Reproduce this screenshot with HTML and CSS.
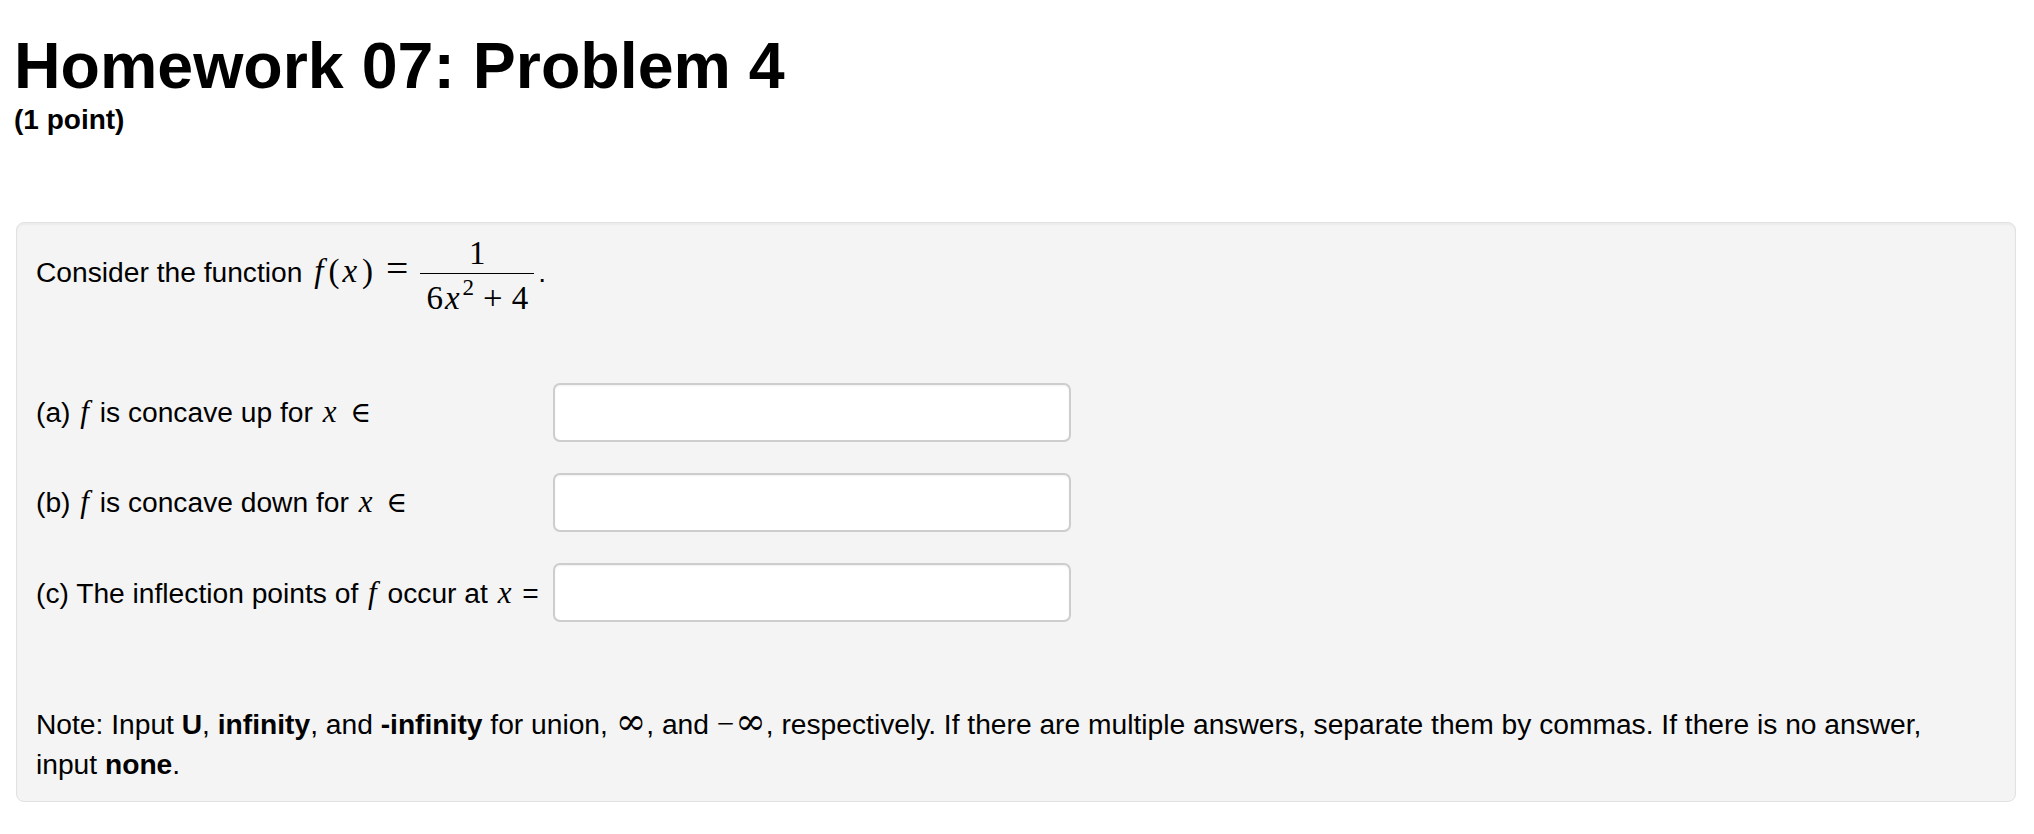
FILE: index.html
```html
<!DOCTYPE html>
<html lang="en">
<head>
<meta charset="utf-8">
<title>Homework 07: Problem 4</title>
<link rel="stylesheet" href="styles.css">
</head>
<body>
<header class="problem-header">
  <h1 class="title">Homework 07: Problem 4</h1>
  <div class="points">(1 point)</div>
</header>
<section class="problem">
  <p class="intro">Consider the function <span class="math"><i class="mi f-lead">f</i><span class="paren">(</span><i class="mi x-in">x</i><span class="paren">)</span><span class="rel">=</span><span class="frac"><span class="num">1</span><span class="den"><span class="d6">6</span><i class="mi x-den">x</i><sup class="sup">2</sup><span class="bin">+</span>4</span></span></span><span class="punct">.</span></p>
  <div class="answers">
    <label class="row-label" for="ans-a">(a) <i class="mi lf">f</i> is concave up for <i class="mi lx">x</i> <span class="elem">∈</span></label>
    <input class="answer" id="ans-a" type="text">
    <label class="row-label" for="ans-b">(b) <i class="mi lf">f</i> is concave down for <i class="mi lx">x</i> <span class="elem">∈</span></label>
    <input class="answer" id="ans-b" type="text">
    <label class="row-label" for="ans-c">(c) The inflection points of <i class="mi lf">f</i> occur at <i class="mi lx">x</i> =</label>
    <input class="answer" id="ans-c" type="text">
  </div>
  <p class="note">Note: Input <b>U</b>, <b>infinity</b>, and <b>-infinity</b> for union, <span class="inf">∞</span>, and <span class="minus">−</span><span class="inf">∞</span>, respectively. If there are multiple answers, separate them by commas. If there is no answer, input <b>none</b>.</p>
</section>
</body>
</html>
```
FILE: styles.css
```css
* {
  box-sizing: border-box;
}

body {
  margin: 0;
  padding: 0 18px 0 16px;
  background: #ffffff;
  color: #000000;
  font-family: "Liberation Sans", Arial, Helvetica, sans-serif;
}

.title {
  margin: 34px 0 0 -2px;
  font-size: 64.5px;
  line-height: 64px;
  font-weight: 700;
}

.points {
  margin: 6px 0 0 -2px;
  font-size: 28px;
  line-height: 32px;
  font-weight: 700;
}

.problem {
  margin-top: 86px;
  padding: 14px 19px 17px;
  background: #f4f4f4;
  border: 1px solid #e1e1e1;
  border-radius: 8px;
  box-shadow: inset 0 2px 2px rgba(0, 0, 0, 0.04);
  font-size: 28.2px;
  line-height: 40px;
}

.intro {
  margin: 0;
  line-height: 38px;
}

/* ---------- math ---------- */

.math {
  font-family: "Liberation Serif", "DejaVu Serif", serif;
  font-size: 33px;
}

.mi {
  font-family: "Liberation Serif", "DejaVu Serif", serif;
  font-style: italic;
}

.f-lead {
  margin: 0 5px 0 4px;
}

.x-in {
  margin: 0 5px 0 3px;
}

.rel {
  font-size: 1.2em;
  margin: 0 12px 0 13px;
}

.frac {
  display: inline-block;
  vertical-align: -27px;
  text-align: center;
}

.num {
  display: block;
  line-height: 33px;
  padding: 0 6px 3px;
}

.den {
  display: block;
  line-height: 33px;
  padding: 7px 6px 0;
  border-top: 1.4px solid #000;
}

.x-den {
  margin: 0 0 0 2px;
}

.sup {
  font-size: 0.7em;
  vertical-align: 0;
  position: relative;
  top: -0.62em;
  margin-left: 3px;
}

.bin {
  font-size: 1.05em;
  margin: 0 9px;
}

.punct {
  margin-left: 4px;
}

/* ---------- answers ---------- */

.answers {
  display: grid;
  grid-template-columns: 517px 518px;
  row-gap: 31px;
  align-items: center;
  margin-top: 65px;
}

.row-label {
  white-space: nowrap;
}

.lf {
  font-size: 1.1em;
  margin: 0 3px 0 2px;
}

.lx {
  font-size: 1.1em;
  margin: 0 3px 0 2px;
}

.elem {
  font-family: "DejaVu Serif", "Liberation Serif", serif;
  margin-left: 3px;
}

.answer {
  height: 59px;
  width: 518px;
  margin: 0;
  background: #ffffff;
  border: 2px solid #cdcdcd;
  border-radius: 7px;
  box-shadow: inset 0 1px 2px rgba(0, 0, 0, 0.06);
  font-size: 28px;
  font-family: inherit;
}

/* ---------- note ---------- */

.note {
  margin: 82px 0 0;
  max-width: 1905px;
  line-height: 40px;
}

.note b {
  font-weight: 700;
}

.minus {
  font-family: "Liberation Serif", "DejaVu Serif", serif;
  font-size: 1.1em;
  line-height: 0;
  margin-right: 1px;
}

.inf {
  font-family: "DejaVu Serif", "Liberation Serif", serif;
  font-size: 1.3em;
  line-height: 0;
}
```
